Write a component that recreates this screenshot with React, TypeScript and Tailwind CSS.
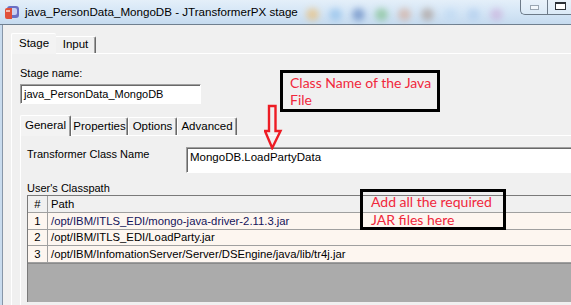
import React from "react";

const ui = "font-['Liberation_Sans',Arial,sans-serif] text-[11px] text-black";

function StageIcon() {
  return (
    <svg width="16" height="16" viewBox="0 0 16 16">
      <rect x="3" y="2" width="12" height="12" rx="3" fill="#6a6fc4" />
      <rect x="5" y="4" width="8" height="7" rx="2" fill="#c9cff2" />
      <path d="M1 6 Q1 4 3 4 L8 4 L8 15 L3 15 Q1 15 1 13 Z" fill="#e0503a" />
      <rect x="2" y="6" width="4" height="2" fill="#f7b8a8" />
    </svg>
  );
}

function Arrow() {
  return (
    <svg width="20" height="46" viewBox="0 0 20 46">
      <polygon
        points="5,2 11.5,2 11.5,27 16.5,27 8.2,44 1,27 5,27"
        fill="none"
        stroke="#ed1c24"
        strokeWidth="2.4"
        strokeLinejoin="miter"
      />
    </svg>
  );
}

const blobs = [
  "bg-[#f4b24c]",
  "bg-[#78b3e8]",
  "bg-[#3b66b0]",
  "bg-[#63b46a]",
  "bg-[#d59a7e]",
  "bg-[#9d8577]",
  "bg-[#b9d6f2]",
  "bg-[#a6c6ec]",
  "bg-[#c8a0d4]",
];

function Tab({ label, w, active }: { label: string; w: string; active?: boolean }) {
  return (
    <div
      className={`${w} ${
        active ? "h-[21px] bg-[#f3f3f3] relative z-10 mb-[-1px]" : "h-[18px] bg-[#f0f0f0]"
      } flex items-center justify-center border-t border-l border-white border-r border-r-[#696969] rounded-t-[2px] shadow-[inset_-1px_0_0_#a0a0a0]`}
    >
      {label}
    </div>
  );
}

const sunken =
  "bg-white border-t border-l border-[#a0a0a0] border-b border-r border-b-white border-r-white shadow-[inset_1px_1px_0_#696969]";

const rows = [
  { n: "1", path: "/opt/IBM/ITLS_EDI/mongo-java-driver-2.11.3.jar", h: "h-[17px]", c: "text-[#14145a]" },
  { n: "2", path: "/opt/IBM/ITLS_EDI/LoadParty.jar", h: "h-[16px]", c: "text-black" },
  { n: "3", path: "/opt/IBM/InfomationServer/Server/DSEngine/java/lib/tr4j.jar", h: "h-[17px]", c: "text-black" },
];

export default function App() {
  return (
    <div className={`w-[571px] h-[305px] overflow-hidden flex flex-col bg-[#f0f0f0] relative ${ui}`}>
      {/* title bar */}
      <div className="h-[25px] shrink-0 flex items-start border-b border-[#6f7f8f] bg-gradient-to-b from-[#e4eff9] via-[#d5e6f6] to-[#c6dbef]">
        <div className="ml-[4px] mt-[4px]">
          <StageIcon />
        </div>
        <div className="ml-[5px] leading-[24px] text-[11.6px] whitespace-nowrap">
          java_PersonData_MongoDB - JTransformerPX stage
        </div>
        <div className="flex gap-[10px] ml-[8px] mt-[8px]">
          {blobs.map((b, i) => (
            <div key={i} className={`w-[13px] h-[13px] rounded-full blur-[3px] opacity-50 ${b}`} />
          ))}
        </div>
        <div className="ml-auto flex h-[15px] border-l border-b border-[#6d7a88] rounded-bl-[5px] bg-white/20">
          <div className="w-[27px] flex items-center justify-center border-r border-[#6d7a88]">
            <div className="w-[9px] h-[5px] border border-[#9aa6b2] bg-white/60" />
          </div>
          <div className="w-[23px] flex pl-[7px] pt-[2px]">
            <div className="w-[11px] h-[8px] border border-[#2a2f36] border-t-2 bg-white" />
          </div>
        </div>
      </div>

      {/* body */}
      <div className="flex-1 flex min-h-0">
        <div className="w-[3px] bg-[#c8dbee] border-r border-[#8796a8]" />
        <div className="flex-1 min-w-0 pl-[8px] pt-[8px] flex flex-col">
          <div className="flex items-end h-[20px]">
            <div className="w-[45px] h-[21px] bg-[#f3f3f3] relative z-10 mb-[-1px] flex items-center justify-center border-t border-l border-white rounded-t-[2px] text-[11.5px]">
              Stage
            </div>
            <div className="w-[40px] h-[17px] flex items-center justify-center border-t border-white border-r border-r-[#696969] rounded-tr-[2px] shadow-[inset_-1px_0_0_#a0a0a0] text-[11.5px]">
              Input
            </div>
          </div>

          <div className="flex-1 border-t border-l border-white pl-[8px] pt-[12px] flex flex-col min-w-0">
            <div className="leading-[14px]">Stage name:</div>
            <div className={`mt-[4px] w-[181px] h-[20px] pl-[3px] leading-[18px] text-[11px] ${sunken}`}>
              java_PersonData_MongoDB
            </div>

            <div className="mt-[10px] flex items-end h-[21px] text-[11.5px]">
              <Tab label="General" w="w-[51px]" active />
              <Tab label="Properties" w="w-[57px]" />
              <Tab label="Options" w="w-[49px]" />
              <Tab label="Advanced" w="w-[60px]" />
            </div>

            <div className="flex-1 border-t border-l border-white pl-[6px] pt-[11px] flex flex-col min-w-0">
              <div className="flex items-start">
                <div className="w-[159px] shrink-0 leading-[14px]">Transformer Class Name</div>
                <div className={`flex-1 h-[26px] pl-[3px] pt-[1px] leading-[16px] text-[11.5px] ${sunken} border-r-0`}>
                  MongoDB.LoadPartyData
                </div>
              </div>

              <div className="mt-[9px] leading-[13px]">User's Classpath</div>

              <div className="flex flex-col border-t border-l border-[#7a7a7a] text-[11.3px]">
                <div className="h-[17px] flex bg-[#f0f0f0] border-b border-[#a0a0a0]">
                  <div className="w-[20px] flex items-center justify-center border-r border-[#a0a0a0]">#</div>
                  <div className="pl-[3px] flex items-center">Path</div>
                </div>
                {rows.map((r) => (
                  <div key={r.n} className={`${r.h} flex bg-[#fdf6f0] border-b border-[#a0a0a0] ${r.c}`}>
                    <div className="w-[20px] flex items-center justify-center border-r border-[#a0a0a0] text-black">
                      {r.n}
                    </div>
                    <div className="pl-[3px] flex items-center whitespace-nowrap">{r.path}</div>
                  </div>
                ))}
                <div className="h-[39px] bg-[#ababab] border-t border-[#8a8a8a]" />
              </div>
            </div>
          </div>
        </div>
      </div>

      {/* annotations */}
      <div className="absolute left-[280px] top-[70px] w-[160px] h-[42px] border-[3px] border-black pl-[7px] pt-[1px] font-['Lato',sans-serif] text-[14px] leading-[17px] text-[#f0283c]">
        <div>Class Name of the Java</div>
        <div>File</div>
      </div>
      <div className="absolute left-[264px] top-[104px]">
        <Arrow />
      </div>
      <div className="absolute left-[360px] top-[189px] w-[146px] h-[41px] border-[3px] border-black pl-[8px] pt-[1px] font-['Lato',sans-serif] text-[14px] leading-[18px] text-[#f0283c]">
        <div>Add all the required</div>
        <div>JAR files here</div>
      </div>
    </div>
  );
}
